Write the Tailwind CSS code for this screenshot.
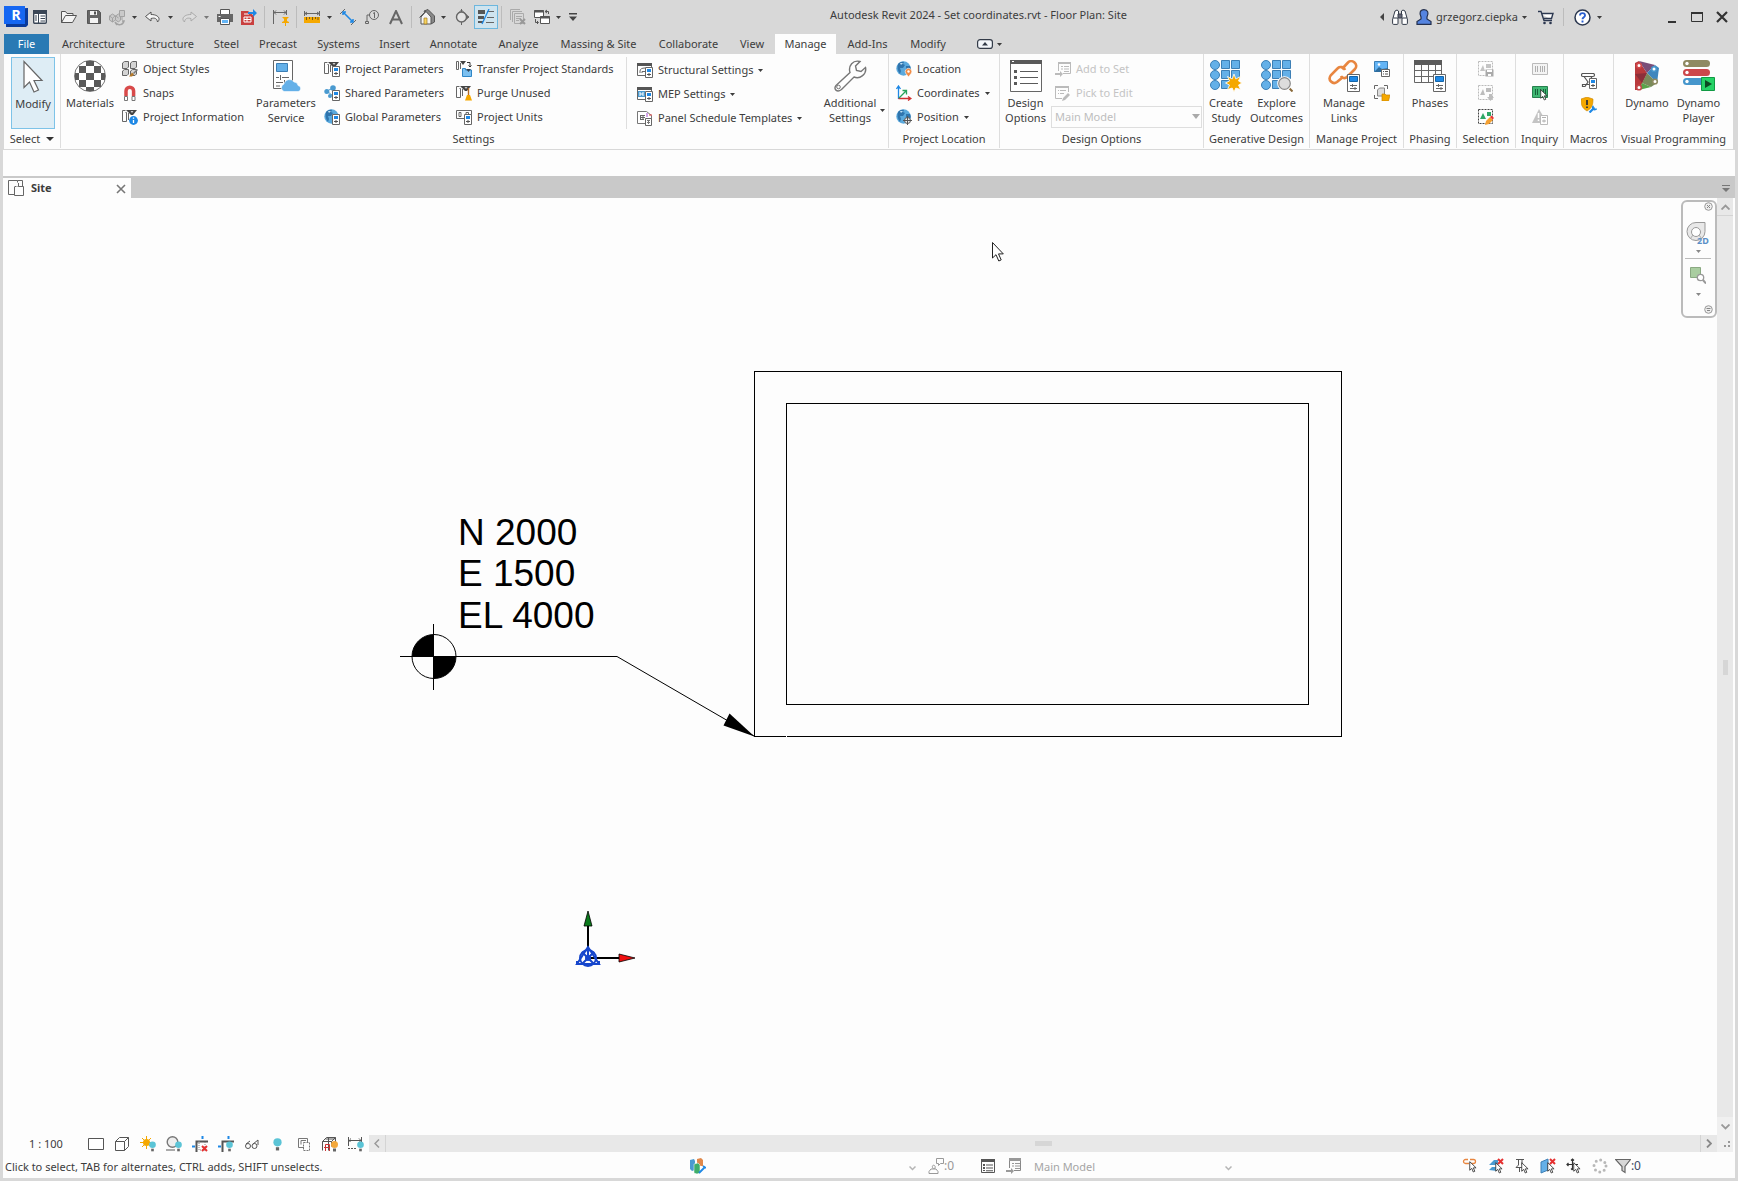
<!DOCTYPE html>
<html lang="en">
<head>
<meta charset="utf-8">
<title>Autodesk Revit 2024 - Set coordinates.rvt - Floor Plan: Site</title>
<meta name="viewport" content="width=device-width, initial-scale=1">
<script src="https://cdn.jsdelivr.net/npm/@tailwindcss/browser@4"></script>
</head>
<body class="flex h-screen flex-col overflow-hidden bg-[#d8d8d8] px-[3px] pb-[3px] font-['Noto_Sans',sans-serif] text-[11px] text-[#3c3c3c]">

<!-- Shared icon parts -->
<svg width="0" height="0" class="absolute" aria-hidden="true">
  <symbol id="caret" viewBox="0 0 5 3"><path d="M0 0h5L2.5 3z" fill="currentColor"/></symbol>
  <symbol id="calc" viewBox="0 0 16 16"><path d="M8.5 5.500h7v10h-7z" fill="#fff" stroke="#666"/><path d="M10 7h4v3h-4z" fill="#1e88e5"/><path d="M10 12.500h4M12 11v3" stroke="#555"/></symbol>
  <symbol id="proj" viewBox="0 0 16 16"><path d="M3.500 1.500h-3v11h4v-9h-1M6.500 11V4" fill="none" stroke="#666"/><path d="M4 1h11l-4 5h-2z" fill="#444"/><path d="M8.500 2h3L10 4z" fill="#ccc"/></symbol>
  <symbol id="globe" viewBox="0 0 16 16"><circle cx="7.500" cy="7.500" r="7.200" fill="#5aa9dd"/><path d="M2 3c2-2 4-2.500 6-2l-1 2 2 1-2 3-3 0 1 3-1 3C1.500 10 1 6 2 3zM10 5l4 0c1 2 1 4 0 5l-3 1-1-3z" fill="#2f74ad"/><path d="M4 2l3 0-2 2z" fill="#bfe0f5"/></symbol>
  <symbol id="window" viewBox="0 0 16 16"><path d="M.5 1.500h14v12H.5z" fill="#fff" stroke="#666"/><path d="M0 1h15v3H0z" fill="#555"/></symbol>
  <symbol id="ptr" viewBox="0 0 9 14"><path d="M.7.8v10l2.400-2.200 1.700 4.200 1.800-.8-1.700-4h3.200z" fill="#fff" stroke="#333"/></symbol>
  <symbol id="bulb" viewBox="0 0 8 12"><circle cx="4" cy="4" r="3.800" fill="#5bc4d6"/><path d="M2.500 8.500h3v3h-3z" fill="#666"/></symbol>
  <symbol id="list" viewBox="0 0 16 16"><path d="M1.500 1.500h13v13h-13z" fill="none" stroke="currentColor"/><path d="M1 1h14v3H1zM3 6h2v2H3zM3 9h2v2H3zM3 12h2v1H3zM6 6.500h7v1H6zM6 9.500h7v1H6zM6 12.200h7v1H6z" fill="currentColor"/></symbol>
</svg>

<!-- Title bar -->
<header class="flex h-[34px] shrink-0 items-center pr-px pl-px">
  <button aria-label="Revit" class="w-6"><svg width="24" height="24" viewBox="0 0 24 24"><path d="M2 4v18h20l2-2V3z" fill="#0b3b9c"/><path d="M0 1h21v18H0z" fill="#1667f2"/><text x="12" y="15" text-anchor="middle" font-size="14" font-weight="700" fill="#fff">R</text></svg></button>
  <nav aria-label="Quick access" class="flex items-center [&>button]:flex [&>button]:h-6 [&>button]:items-center [&>button]:justify-center">
    <button aria-label="Home" class="w-6"><svg width="16" height="16" viewBox="0 0 16 16"><rect x="1.700" y="1.700" width="12.600" height="12.600" rx="1" fill="#fff" stroke="#3a4656" stroke-width="1.400"/><path d="M1 1h14v4H1zM6 5h1v10H6z" fill="#3a4656"/><path d="M3 7h2M3 9h2M3 11h2M8.500 7H13M8.500 9.500H13M8.500 12H13" stroke="#3a4656"/></svg></button>
    <button aria-label="Open" class="ml-[3px] w-7"><svg width="18" height="16" viewBox="0 0 18 16"><path d="M1.500 13.500v-11h4l1.500 2h6v2M1.500 13.500l4-7h11l-4 7z" fill="#f4f4f4" stroke="#555"/></svg></button>
    <button aria-label="Save" class="w-[21px]"><svg width="16" height="16" viewBox="0 0 16 16"><path d="M1.500 1.500h11l2 2v11h-13z" fill="#666" stroke="#555"/><path d="M4 2h7v4H4zM4 9h8v5H4z" fill="#f4f4f4"/><path d="M8 2.500h2v3H8z" fill="#555"/></svg></button>
    <button aria-label="Synchronize" class="w-[25px]"><svg width="18" height="18" viewBox="0 0 18 18" fill="#c9c9c9" stroke="#a2a2a2"><path d="M1.500 8l3-2 3 2v4l-3 2-3-2zM7.500 8l3-2 2 1v5l-2 2-3-2zM1.500 8l3 2 3-2 3 2M4.500 10v4"/><path d="M11.500 2.500h5v6h-5zM14 9v3"/><path d="M8 15c2 3 7 2 8-2l-2 0M9 17l-2-3" fill="none" stroke-width="1.500"/></svg></button>
    <button aria-label="Synchronize options" class="w-[11px]"><svg width="5" height="3"><use href="#caret"/></svg></button>
    <button aria-label="Undo" class="w-[25px]"><svg width="18" height="14" viewBox="0 0 18 14"><path d="M7 2L1.500 6.500 7 11V8.500c4-1 6 0 6.500 3.500 3.500-3 1-7.500-6.500-7.500z" fill="#f4f4f4" stroke="#555"/></svg></button>
    <button aria-label="Undo list" class="w-[11px]"><svg width="5" height="3"><use href="#caret"/></svg></button>
    <button aria-label="Redo" class="w-[25px]"><svg width="18" height="14" viewBox="0 0 18 14"><path d="M11 2l5.500 4.500L11 11V8.500c-4-1-6 0-6.500 3.500C1 9 3.500 4.500 11 4.500z" fill="#ddd" stroke="#aaa"/></svg></button>
    <button aria-label="Redo list" class="w-[11px] text-[#777]"><svg width="5" height="3"><use href="#caret"/></svg></button>
    <button aria-label="Print" class="w-[25px]"><svg width="16" height="16" viewBox="0 0 16 16"><path d="M3.500.5h9v6h-9z" fill="#fff" stroke="#555"/><path d="M0 5h16v8H0z" fill="#666"/><path d="M1.500 7.500h2" stroke="#fff"/><path d="M3.500 9.500h9v6h-9z" fill="#fff" stroke="#555"/><path d="M5 11h6v3H5z" fill="#64b5f6"/></svg></button>
    <button aria-label="PDF" class="w-6"><svg width="16" height="16" viewBox="0 0 16 16"><path d="M0 2h7l6 5v9H0z" fill="#c9403f"/><path d="M3 5h5M3 8h7v5H3zM3 10.500h7M6 8v5" fill="none" stroke="#fff"/><path d="M7 3h5V0l4 4-4 4V5H7z" fill="#1e88e5"/></svg></button>
    <span class="mx-[3px] h-[22px] w-px bg-[#bcbcbc]"></span>
    <button aria-label="Pinned dimension" class="w-[25px]"><svg width="16" height="17" viewBox="0 0 16 17"><path d="M.5 1v14M13.500 1v5M1 3.500h12M3 1.500l-2 2 2 2M11 1.500l2 2-2 2" fill="none" stroke="#666"/><path d="M9 8h7l-2 2v2l2 1v1h-3v3h-1v-3H9v-1l2-1v-2z" fill="#f5a800"/></svg></button>
    <span class="mx-[3px] h-[22px] w-px bg-[#bcbcbc]"></span>
    <button aria-label="Measure" class="w-6"><svg width="16" height="12" viewBox="0 0 16 12"><path d="M.5 0v5M15.500 0v5M1 2.500h14M3 1L1 2.500 3 4M13 1l2 1.500L13 4" fill="none" stroke="#666"/><path d="M0 6h16v6H0z" fill="#f5a800"/><path d="M2.500 6v3M5.500 6v2M8.500 6v3M11.500 6v2M14 6v3" stroke="#7a5a10"/></svg></button>
    <button aria-label="Measure options" class="w-[11px]"><svg width="5" height="3"><use href="#caret"/></svg></button>
    <button aria-label="Aligned dimension" class="w-[25px]"><svg width="16" height="16" viewBox="0 0 16 16"><path d="M0 5l5-5M11 16l5-5" stroke="#666"/><path d="M3 3l10 10M3 6V3h3M10 13h3v-3" fill="none" stroke="#1e88e5" stroke-width="1.500"/></svg></button>
    <button aria-label="Tag" class="w-6"><svg width="16" height="16" viewBox="0 0 16 16" fill="none" stroke="#666"><circle cx="10" cy="6" r="4.500"/><path d="M9 4.500l1.500-1V9M6 6H3v7M1.500 12.500h3v2h-3z"/></svg></button>
    <button aria-label="Text" class="w-6"><svg width="14" height="15" viewBox="0 0 14 15"><path d="M1 14L7 1l6 13M3.500 9.500h7" fill="none" stroke="#666" stroke-width="2"/></svg></button>
    <span class="mx-[3px] h-[22px] w-px bg-[#bcbcbc]"></span>
    <button aria-label="Default 3D view" class="w-[23px]"><svg width="16" height="16" viewBox="0 0 16 16"><path d="M5 2l4-1.500L15.500 7v6L12 15z" fill="#888" stroke="#555"/><path d="M2 8l5-5.500L12 8v7H2z" fill="#f4f4f4" stroke="#555"/><path d="M5 9h3v6H5z" fill="#f7d560" stroke="#a07a20" stroke-width=".7"/><path d="M.5 8.500L7 2" stroke="#555"/></svg></button>
    <button aria-label="View options" class="w-[11px]"><svg width="5" height="3"><use href="#caret"/></svg></button>
    <button aria-label="Section" class="w-[25px]"><svg width="14" height="16" viewBox="0 0 14 16"><path d="M6.500 16V0M6.500 1l3 3M6.500 1l-3 3M9 4l5 4-5 4z" fill="#666" stroke="#666"/><circle cx="6.500" cy="8" r="5" fill="#e4e4e4" stroke="#666" stroke-width="1.400"/></svg></button>
    <button aria-label="Thin lines" class="w-6 border border-[#6db7de] bg-[#cfe4ef]"><svg width="18" height="16" viewBox="0 0 18 16"><path d="M1 1h7v4H1zM1 7h6v3H1zM1 12h5v2H1z" fill="#555"/><path d="M10 2.500h7M10 8.500h7M9 13.500h8" stroke="#666"/><path d="M12 0L5 15" stroke="#1e88e5" stroke-width="1.300"/></svg></button>
    <span class="mx-[3px] h-[22px] w-px bg-[#bcbcbc]"></span>
    <button aria-label="Close inactive views" class="w-[25px]"><svg width="16" height="16" viewBox="0 0 16 16" stroke="#aaa" fill="#d8d8d8"><path d="M.5 11V.5H10M2.500 13V2.500H12"/><path d="M4.500 4.500h9v10h-9zM6 7.500h6M6 9.500h5M6 11.500h3"/><path d="M10 10l5 5M15 10l-5 5" stroke="#999" stroke-width="2"/></svg></button>
    <button aria-label="Switch windows" class="w-[23px]"><svg width="16" height="16" viewBox="0 0 16 16" stroke="#555" fill="#fff"><path d="M.5 1.500h9v7h-9zM6.500 7.500h9v7h-9z"/><path d="M0 2.500h10M6 8.500h10" stroke-width="2"/><path d="M11 2.500h3.500V5M13 1l-2 1.500L13 4M1.500 10v3.500H4M3 12l1.500 1.500L3 15" fill="none"/></svg></button>
    <button aria-label="Window options" class="w-[11px]"><svg width="5" height="3"><use href="#caret"/></svg></button>
    <button aria-label="Customize" class="w-[18px]"><svg width="8" height="8" viewBox="0 0 8 8"><path d="M0 0h8v1.500H0zM0 3.500h8L4 8z" fill="#444"/></svg></button>
  </nav>
  <h1 class="min-w-0 flex-1 truncate pb-1 text-center">Autodesk Revit 2024 - Set coordinates.rvt - Floor Plan: Site</h1>
  <div class="flex items-center [&>button]:flex [&>button]:h-6 [&>button]:items-center [&>button]:justify-center">
    <button aria-label="Collapse" class="w-[13px]"><svg width="4" height="8"><path d="M4 0v8L0 4z" fill="#444"/></svg></button>
    <button aria-label="Search" class="w-6"><svg width="16" height="16" viewBox="0 0 16 16" fill="#fff" stroke="#333b48"><path d="M1 9l2-7 2-1 1.500 1v7M15 9l-2-7-2-1-1.500 1v7"/><path d="M6 5h4v4H6z" fill="#667"/><rect x=".6" y="9" width="5.400" height="6.400" rx="1"/><rect x="10" y="9" width="5.400" height="6.400" rx="1"/></svg></button>
    <button class="w-[122px] justify-start! gap-1 pl-1"><svg width="16" height="16" viewBox="0 0 16 16"><path d="M5 8C3 4 4 .7 8 .7S13 4 11 8v2l4 2.500v2.800H1v-2.800L5 10z" fill="#5584e0" stroke="#24304d" stroke-width="1.200"/></svg><span>grzegorz.ciepka</span><svg width="5" height="3"><use href="#caret"/></svg></button>
    <button aria-label="App store" class="w-6"><svg width="16" height="16" viewBox="0 0 16 16"><path d="M0 2.500h3l3 9h8M4 4.500h11l-1.500 5h-8" fill="#fff" stroke="#2c3850" stroke-width="1.400"/><circle cx="6.500" cy="14" r="1.300" fill="#2c3850"/><circle cx="12.500" cy="14" r="1.300" fill="#2c3850"/></svg></button>
    <span class="mr-1.5 ml-[5px] h-[18px] w-px bg-[#bcbcbc]"></span>
    <button aria-label="Help" class="w-6"><svg width="17" height="17" viewBox="0 0 17 17"><circle cx="8.500" cy="8.500" r="7.500" fill="#fff" stroke="#2c3850" stroke-width="1.500"/><path d="M6 6.500c0-3.200 5-3.200 5 0 0 1.800-2.500 1.800-2.500 3.800M8.500 11.500v2" fill="none" stroke="#2a5fd0" stroke-width="1.900"/></svg></button>
    <button aria-label="Help options" class="w-[11px]"><svg width="5" height="3"><use href="#caret"/></svg></button>
    <span class="w-[54px]"></span>
    <button aria-label="Minimize" class="w-[25px]"><svg width="16" height="16"><path d="M4 12h8v2H4z" fill="#333"/></svg></button>
    <button aria-label="Maximize" class="w-[25px]"><svg width="14" height="14"><path d="M1.500 2.500h11v9h-11z" fill="none" stroke="#333"/><path d="M1 2h12v2H1z" fill="#333"/></svg></button>
    <button aria-label="Close" class="w-[25px]"><svg width="14" height="14"><path d="M2 2l10 10M12 2L2 12" stroke="#333" stroke-width="2.200"/></svg></button>
  </div>
</header>

<!-- Ribbon tabs -->
<nav aria-label="Ribbon tabs" class="flex h-5 shrink-0 pl-px [&>button]:shrink-0 [&>button]:whitespace-nowrap">
  <button class="mr-0.5 w-[45px] bg-[#2a7ab4] text-white">File</button>
  <button class="w-[85px]">Architecture</button>
  <button class="w-[68px]">Structure</button>
  <button class="w-[45px]">Steel</button>
  <button class="w-[58px]">Precast</button>
  <button class="w-[63px]">Systems</button>
  <button class="w-[49px]">Insert</button>
  <button class="w-[69px]">Annotate</button>
  <button class="w-[61px]">Analyze</button>
  <button class="w-[99px]">Massing &amp; Site</button>
  <button class="w-[81px]">Collaborate</button>
  <button class="w-[46px]">View</button>
  <button class="w-[61px] bg-[#fdfdfd]">Manage</button>
  <button class="w-[63px]">Add-Ins</button>
  <button class="w-[58px]">Modify</button>
  <button aria-label="Minimize ribbon" class="ml-5 flex items-center gap-1"><svg width="16" height="10" viewBox="0 0 16 10"><rect x=".6" y=".6" width="14.800" height="8.800" rx="2.500" fill="#f3f6fa" stroke="#333b48" stroke-width="1.200"/><path d="M8 3l3 3.500H5z" fill="#333b48"/></svg><svg width="5" height="3"><use href="#caret"/></svg></button>
</nav>

<!-- Ribbon -->
<main class="mr-0.5 ml-px flex h-[95px] shrink-0 overflow-hidden bg-[#fdfdfd] [&>section]:flex [&>section]:h-[94px] [&>section]:shrink-0 [&>section]:flex-col [&>section]:border-r [&>section]:border-[#dedede] [&>section>div]:flex [&>section>div]:h-[77px] [&>section>div]:pt-[3px] [&>section>h2]:text-center [&>section>h2]:leading-4 [&>section>h2]:whitespace-nowrap">
  <section class="w-[57px]">
    <div class="pl-[7px]">
      <button class="flex h-[72px] w-11 flex-col items-center border border-[#7dc3e8] bg-[#deedf5] pt-0.5 leading-[15px]"><svg class="mb-0.5" width="32" height="34" viewBox="0 0 32 34"><path d="M7 1.500v26l5.500-5.500 4.500 10 4.500-2-4.500-9.500H25z" fill="#fff" stroke="#666" stroke-width="1.200"/></svg>Modify</button>
    </div>
    <h2><button class="inline-flex items-center gap-1.5">Select <svg width="8" height="4" viewBox="0 0 8 4"><path d="M0 0h8L4 4z" fill="#333"/></svg></button></h2>
  </section>

  <section class="w-[828px]">
    <div class="[&_ul]:shrink-0 [&_li>button]:flex [&_li>button]:h-6 [&_li>button]:items-center [&_li>button]:gap-[5px] [&_li>button]:whitespace-nowrap">
      <button class="flex w-[58px] shrink-0 flex-col items-center pt-[3px] leading-[15px]"><svg class="mb-[3px]" width="32" height="32" viewBox="0 0 32 32"><circle cx="16" cy="16" r="15.500" fill="#fff" stroke="#777"/><path d="M12 1h8v5h-8zM5 6h7v7H5zM20 6h7v7h-7zM1 13h4v7H1zM12 13h8v7h-8zM27 13h4v7h-4zM5 20h7v7H5zM20 20h7v7h-7zM12 27h8v4h-8z" fill="#5a5a5a"/></svg>Materials</button>
      <ul class="w-[132px] pl-[3px]">
        <li><button><svg width="16" height="16" viewBox="0 0 16 16"><path d="M.5 2l2-1.500h4V6L5 7.500H.5zM8.500 2l2-1.500h4V6L13 7.500H8.500zM.5 10l2-1.500h4V13L5 14.500H.5zM8.500 10l2-1.500h4V13L13 14.500H8.500z" fill="#d4d4d4" stroke="#666"/><path d="M7 15.500l3-4 2 2-2 2z" fill="#b57a2a"/><path d="M11 12l4-4 1 1-4 4z" fill="#777"/></svg>Object Styles</button></li>
        <li><button><svg width="16" height="16" viewBox="0 0 16 16"><path d="M4 11V6a3.800 3.800 0 0 1 7.600 0v5" fill="none" stroke="#d84a4a" stroke-width="3.500"/><path d="M2.500 11.500h3v4h-3zM10 11.500h3v4h-3z" fill="#fff" stroke="#777"/></svg>Snaps</button></li>
        <li><button><svg width="16" height="16" viewBox="0 0 16 16"><use href="#proj"/><circle cx="11.500" cy="11.500" r="4.400" fill="#1e88e5"/><path d="M11.500 8.500v1.200M11.500 11v3" stroke="#fff" stroke-width="1.300"/></svg>Project Information</button></li>
      </ul>
      <button class="flex w-[70px] shrink-0 flex-col items-center pt-[3px] leading-[15px]"><svg class="mb-[3px]" width="32" height="32" viewBox="0 0 32 32"><path d="M3.500.5h19v28h-19z" fill="#fff" stroke="#666"/><path d="M6.500 3.500h11v8h-11z" fill="#64b0e8" stroke="#3c7fb5"/><path d="M6 17.500h3M12 17.500h7M10.500 15v5M6 22.500h7M14.500 20v5M6 26h4" stroke="#666"/><path d="M14 31.500a4 4 0 0 1 0-7.500 5.500 5.500 0 0 1 10-2 4 4 0 0 1 4 3.500c4 1 3 6 0 6z" fill="#64b0e8" stroke="#fff" stroke-width=".6"/></svg>Parameters<br>Service</button>
      <ul class="w-[132px] pl-[3px]">
        <li><button><svg width="16" height="16"><use href="#proj"/><use href="#calc"/></svg>Project Parameters</button></li>
        <li><button><svg width="16" height="16" viewBox="0 0 16 16"><path d="M3 6l6-3M3 6l6 5" stroke="#4a9ad0"/><circle cx="2.800" cy="6.500" r="2.500" fill="#4a9ad0"/><circle cx="9" cy="3" r="2.800" fill="#4a9ad0"/><circle cx="6" cy="11" r="2" fill="#4a9ad0"/><use href="#calc"/></svg>Shared Parameters</button></li>
        <li><button><svg width="16" height="16"><use href="#globe"/><use href="#calc"/></svg>Global Parameters</button></li>
      </ul>
      <ul class="w-[173px] pl-[3px]">
        <li><button><svg width="16" height="16" viewBox="0 0 16 16"><path d="M.5.500h2v8h-2zM4.500 2v6" fill="none" stroke="#666"/><path d="M4 0h6L7 4z" fill="#444"/><path d="M11 1.500h3V6M12.500 4.500L14 6l1.500-1.500" fill="none" stroke="#333"/><path d="M6.500 7.500h3v1.500h6v6.500h-9z" fill="#7cc0f0" stroke="#2f86c6"/><path d="M10 8h5l-2.500 3z" fill="#345"/></svg>Transfer Project Standards</button></li>
        <li><button><svg width="16" height="16" viewBox="0 0 16 16"><use href="#proj"/><path d="M12.500 3v8" stroke="#b06a2a" stroke-width="1.400"/><path d="M11 10h3l2 5.500H9z" fill="#f5a800"/></svg>Purge Unused</button></li>
        <li><button><svg width="16" height="16" viewBox="0 0 16 16"><path d="M.5 1.500h15v8H.5z" fill="#fff" stroke="#666"/><path d="M3 3.500h2v4H3zM10 5V3.500h2.500V5" fill="none" stroke="#666"/><use href="#calc"/></svg>Project Units</button></li>
      </ul>
      <span class="h-[72px] w-px shrink-0 bg-[#dedede]"></span>
      <ul class="w-[185px] pt-px pl-2.5">
        <li><button><svg width="16" height="16" viewBox="0 0 16 16"><use href="#window"/><path d="M3 11V9c0-2 2-3 5-3M5 11V9.500h3" fill="none" stroke="#666"/><use href="#calc"/></svg>Structural Settings<svg width="5" height="3"><use href="#caret"/></svg></button></li>
        <li><button><svg width="16" height="16" viewBox="0 0 16 16"><use href="#window"/><path d="M1 5h7v6H1z" fill="#4a9ad0"/><path d="M3 6v4M6 6v4M3 8h3" stroke="#fff"/><use href="#calc"/></svg>MEP Settings<svg width="5" height="3"><use href="#caret"/></svg></button></li>
        <li><button><svg width="16" height="16" viewBox="0 0 16 16"><path d="M.5 1.500h9l5 4v8H.5z" fill="#fff" stroke="#777"/><path d="M3 5.500h5M3 7.500h5M3 9.500h4M3.500 5v5M6 5v5" stroke="#666"/><path d="M9 6h2M10 3v2" stroke="#a54bd0"/><path d="M12 5h3" stroke="#e04040"/><path d="M8.500 8.500h6v7h-6z" fill="#fff" stroke="#666"/><path d="M10 10.500h3M10 12.500h3M11.500 10v4" stroke="#777"/></svg>Panel Schedule Templates<svg width="5" height="3"><use href="#caret"/></svg></button></li>
      </ul>
      <button class="relative flex w-[76px] shrink-0 flex-col items-center pt-[3px] leading-[15px]"><svg class="mb-[3px]" width="34" height="32" viewBox="0 0 34 32"><path d="M3 25.500L17 12.500C15 6 20-.5 27 1.500L22.500 6l1 4.500L28 11.500 32.500 7.500C34 14 27 19.500 21 17L8.500 29.500C4 33 0 29 3 25.500z" fill="#fff" stroke="#777" stroke-width="1.400"/><circle cx="5.500" cy="27" r="1.800" fill="none" stroke="#777"/></svg>Additional<br>Settings<svg class="absolute top-[52px] right-[3px]" width="5" height="3"><use href="#caret"/></svg></button>
    </div>
    <h2 class="pr-[2px]">Settings</h2>
  </section>

  <section class="w-[111px]">
    <div>
      <ul class="pl-[7px] [&_button]:flex [&_button]:h-6 [&_button]:items-center [&_button]:gap-[5px] [&_button]:whitespace-nowrap">
        <li><button><svg width="16" height="16" viewBox="0 0 16 16"><use href="#globe"/><path d="M12.500 16l-3-4a3.300 3.300 0 1 1 6 0z" fill="#f08c46" stroke="#fff" stroke-width=".6"/><circle cx="12.500" cy="10.500" r="1.200" fill="#fff"/></svg>Location</button></li>
        <li><button><svg width="16" height="16" viewBox="0 0 16 16" fill="none"><path d="M2.500 14V2M.5 4l2-3 2 3" stroke="#1e88e5" stroke-width="1.300"/><path d="M2.500 13.500h12M12 11.500l3 2-3 2" stroke="#d03030" stroke-width="1.300"/><path d="M3 13l7-7M6.500 5.500h4v4" stroke="#27a35a" stroke-width="1.300"/></svg>Coordinates<svg width="5" height="3"><use href="#caret"/></svg></button></li>
        <li><button><svg width="16" height="16" viewBox="0 0 16 16"><use href="#globe"/><circle cx="11.500" cy="11.500" r="3" fill="#eee" stroke="#555"/><path d="M11.500 7v9M7 11.500h9" stroke="#555"/></svg>Position<svg width="5" height="3"><use href="#caret"/></svg></button></li>
      </ul>
    </div>
    <h2>Project Location</h2>
  </section>

  <section class="w-[204px]">
    <div>
      <button class="flex w-[51px] shrink-0 flex-col items-center pt-[3px] leading-[15px]"><svg class="mb-[3px]" width="32" height="32" viewBox="0 0 32 32"><path d="M.5.500h31v31H.5z" fill="#fff" stroke="#666"/><path d="M0 0h32v4H0zM4 10h3v3H4zM4 16h3v3H4zM4 22h3v3H4zM10 11h18v1H10zM10 17h18v1H10zM10 23h18v1H10z" fill="#5a5a5a"/><path d="M2 1.500h2" stroke="#fff"/></svg>Design<br>Options</button>
      <div class="flex flex-col text-[#c4c4c4]">
        <button class="flex h-6 items-center gap-[5px] pl-1"><svg width="16" height="16" viewBox="0 0 16 16"><path d="M3.500 10V1.500h12v11H8" fill="none" stroke="#bbb"/><path d="M3 1h13v2H3zM6 5h2v1H6zM9 5h5v1H9zM6 7.500h2v1H6zM9 7.500h5v1H9zM9 10h5v1H9zM0 12h5v-2l3 3-3 3v-2H0z" fill="#bbb"/></svg>Add to Set</button>
        <button class="flex h-6 items-center gap-[5px] pl-1"><svg width="16" height="16" viewBox="0 0 16 16"><path d="M7 13.500H.5v-12h13V7" fill="none" stroke="#bbb"/><path d="M0 1h14v2H0zM3 5h1v1H3zM5 5h6v1H5zM3 8h1v1H3zM5 8h4v1H5zM8 13l5-5 2 2-5 5-3 1z" fill="#bbb"/></svg>Pick to Edit</button>
        <div class="relative mt-px">
          <select aria-label="Active design option" disabled class="block h-[22px] w-[151px] appearance-none border border-[#dedede] bg-transparent pl-[3px] text-[11px] text-[#bdbdbd] opacity-100"><option>Main Model</option></select>
          <svg class="absolute top-2 right-0.5 text-[#aaa]" width="8" height="5"><use href="#caret"/></svg>
        </div>
      </div>
    </div>
    <h2>Design Options</h2>
  </section>

  <section class="w-[106px]">
    <div>
      <button class="flex w-[44px] shrink-0 flex-col items-center pt-[3px] leading-[15px]"><svg class="mb-[3px]" width="32" height="32" viewBox="0 0 32 32"><g fill="#64b0e8" stroke="#3c7fb5"><circle cx="5" cy="5" r="4.500"/><circle cx="5" cy="15" r="4.500"/><circle cx="5" cy="25" r="4.500"/><path d="M11.500.5h8v8h-8zM21.500.5h8v8h-8zM11.500 10.500h8v8h-8zM21.500 10.500h8v8h-8zM11.500 20.500h8v8h-8z"/></g><path d="M24 14l1.800 5 4.700-2.500L28.500 21l3.500 2-3.500 2 2 4.500-4.700-1.500L24 32l-1.800-4-4.700 1.500 2-4.500-4-2 4-2-2-4.500 4.700 2.500z" fill="#f5a800" stroke="#fff" stroke-width=".8"/></svg>Create<br>Study</button>
      <button class="flex w-[57px] shrink-0 flex-col items-center pt-[3px] leading-[15px]"><svg class="mb-[3px]" width="32" height="32" viewBox="0 0 32 32"><g fill="#64b0e8" stroke="#3c7fb5"><circle cx="5" cy="5" r="4.500"/><circle cx="5" cy="15" r="4.500"/><circle cx="5" cy="25" r="4.500"/><path d="M11.500.5h8v8h-8zM21.500.5h8v8h-8zM11.500 10.500h8v8h-8zM21.500 10.500h8v8h-8zM11.500 20.500h8v8h-8z"/></g><path d="M27 27l4.500 4.500" stroke="#8a6a3a" stroke-width="2"/><circle cx="23.500" cy="23.500" r="5.800" fill="#ddd" stroke="#fff" stroke-width="3"/><circle cx="23.500" cy="23.500" r="5.800" fill="#ddd" stroke="#888" stroke-width="1.200"/></svg>Explore<br>Outcomes</button>
    </div>
    <h2>Generative Design</h2>
  </section>

  <section class="w-[94px]">
    <div>
      <button class="flex w-[64px] shrink-0 flex-col items-center pt-[3px] pl-1 leading-[15px]"><svg class="mb-[3px]" width="32" height="32" viewBox="0 0 32 32"><g fill="none" stroke="#e88640" stroke-width="2.600"><path d="M14 9l6-6.500c4-4 11 2 7 6.500l-8 8c-2 2-5 1-6-1"/><path d="M15 17l-6 5c-4 3-10-2-6-7l7-7c2-2 6-1 7 2"/></g><path d="M19.500 14.500h12v17h-12z" fill="#fff" stroke="#666"/><path d="M21.500 16.500h8v5h-8z" fill="#1e88e5" stroke="#1565a8"/><path d="M22 25.500h7M22 28.500h7M24.500 24v3M27 27v3" stroke="#666"/></svg>Manage<br>Links</button>
      <div class="flex flex-col">
        <button aria-label="Decal types" class="flex h-6 items-center"><svg width="16" height="16" viewBox="0 0 16 16"><path d="M.5.500h13v10H.5z" fill="#64b5f6" stroke="#3c7fb5"/><path d="M0 11l5-5 3 2 6-1v4z" fill="#2e6d9e"/><circle cx="5" cy="3.500" r="1.300" fill="#fff"/><path d="M7.500 8.500h8v7h-8z" fill="#fff" stroke="#666"/><path d="M9 10.500h1M11 10.500h3M9 13h1M11 13h3" stroke="#555"/></svg></button>
        <button aria-label="Starting view" class="flex h-6 items-center"><svg width="16" height="16" viewBox="0 0 16 16"><path d="M.5 4V.5H4M10 .5h3.500V4M.5 10v3.500H4" fill="none" stroke="#666"/><path d="M3.500 5l2-2h5v6l-2 2h-5z" fill="#ddd" stroke="#888"/><path d="M8 9h3l1 1h4l-1.500 6H8z" fill="#f5a800" stroke="#c98500" stroke-width=".7"/></svg></button>
      </div>
    </div>
    <h2>Manage Project</h2>
  </section>

  <section class="w-[53px]">
    <div>
      <button class="flex w-full shrink-0 flex-col items-center pt-[3px] leading-[15px]"><svg class="mb-[3px]" width="32" height="32" viewBox="0 0 32 32"><path d="M.5.500h27v22H.5zM7.500 4v18M14.500 4v18M21.500 4v18M1 10.500h27M1 16.500h27" fill="none" stroke="#666"/><path d="M0 0h28v5H0z" fill="#5a5a5a"/><path d="M19.500 14.500h12v17h-12z" fill="#fff" stroke="#666"/><path d="M21.500 16.500h8v5h-8z" fill="#1e88e5" stroke="#1565a8"/><path d="M22 25.500h7M22 28.500h7M24.500 24v3M27 27v3" stroke="#666"/></svg>Phases</button>
    </div>
    <h2>Phasing</h2>
  </section>

  <section class="w-[59px]">
    <div class="flex-col items-center [&>button]:flex [&>button]:h-6 [&>button]:items-center">
      <button aria-label="Save selection"><svg width="16" height="16" viewBox="0 0 16 16"><path d="M.5.500h14v14H.5z" fill="none" stroke="#bbb" stroke-dasharray="2 1"/><path d="M2 10l3-6 2 6zM8 3h5v4H8z" fill="#c4c4c4"/><path d="M7.500 8.500h8v7h-8z" fill="#aaa"/><path d="M9 9h5v2H9zM10 13h3v2h-3z" fill="#fff"/></svg></button>
      <button aria-label="Load selection"><svg width="16" height="16" viewBox="0 0 16 16"><path d="M.5.500h14v14H.5z" fill="none" stroke="#bbb" stroke-dasharray="2 1"/><path d="M2 10l3-6 2 6zM8 3h5v4H8zM11 9h3v3h2l-3.500 4L9 12h2z" fill="#bdbdbd"/></svg></button>
      <button aria-label="Edit selection"><svg width="16" height="16" viewBox="0 0 16 16"><path d="M.5.500h14v14H.5z" fill="none" stroke="#444" stroke-dasharray="2 1"/><path d="M2 10l3-6 3 6zM9 3h4v4H9z" fill="#2fa866"/><path d="M7 16l1-4 4-4 3 3-4 4z" fill="#f5a030"/><path d="M12 8l1.500-1.500 2.500 2.500-1.500 1.500z" fill="#e33"/></svg></button>
    </div>
    <h2>Selection</h2>
  </section>

  <section class="w-[48px]">
    <div class="flex-col items-center [&>button]:flex [&>button]:h-6 [&>button]:items-center">
      <button aria-label="IDs of selection"><svg width="16" height="16" viewBox="0 0 16 16"><path d="M.5 2.500h15v11H.5z" fill="#f4f4f4" stroke="#bbb"/><path d="M3.500 5v6M5.500 5v6M8.500 5v6M10.500 5v6M12.500 5v6" stroke="#b0b0b0"/></svg></button>
      <button aria-label="Select by ID"><svg width="16" height="16" viewBox="0 0 16 16"><path d="M.5 1.500h15v11H.5z" fill="#3fb873" stroke="#27804e"/><path d="M3.500 4v6M5.500 4v6M8.500 4v3M11.500 4v5M13.500 4v5" stroke="#17613a"/><svg x="8" y="4" width="8" height="12"><use href="#ptr"/></svg></svg></button>
      <button aria-label="Warnings"><svg width="16" height="16" viewBox="0 0 16 16"><path d="M0 14L7 0l4 7v7z" fill="#c4c4c4"/><path d="M6.500 4v5M6.500 10.500V12" stroke="#fff" stroke-width="1.500"/><path d="M8.500 6.500h7v9h-7z" fill="#fff" stroke="#bbb"/><path d="M10 8.500h4M10 12h4M12 10.500v3" stroke="#b0b0b0"/></svg></button>
    </div>
    <h2>Inquiry</h2>
  </section>

  <section class="w-[50px]">
    <div class="flex-col items-center justify-center pb-[3px] [&>button]:flex [&>button]:h-6 [&>button]:items-center">
      <button aria-label="Macro manager"><svg width="16" height="16" viewBox="0 0 16 16"><path d="M2 .5h10c2 0 2 3 0 3H2c-2 0-2-3 0-3zM3 3.500L7 9l-3 4.500H1.500v-2H8M11 3.500L9 7" fill="#fff" stroke="#555" stroke-width="1.200"/><use href="#calc"/></svg></button>
      <button aria-label="Macro security"><svg width="16" height="16" viewBox="0 0 16 16"><path d="M6 0l6 2c0 6-1 9-6 12C1 11 0 8 0 2z" fill="#f5a800" stroke="#c98500" stroke-width=".6"/><path d="M6 3v5M6 9.500V11" stroke="#333" stroke-width="1.800"/><path d="M8.500 15.500l5-5" stroke="#1e88e5" stroke-width="2.200"/><path d="M12.500 9a2 2 0 1 0 3 2.500" fill="none" stroke="#1e88e5" stroke-width="1.600"/></svg></button>
    </div>
    <h2>Macros</h2>
  </section>

  <section class="w-[119px] border-r-0!">
    <div class="pl-1.5">
      <button class="flex w-[54px] shrink-0 flex-col items-center pt-[3px] leading-[15px]"><svg class="mb-[3px]" width="26" height="32" viewBox="0 0 26 32"><path d="M1 3l4-2 8 12L5 30H1z" fill="#b8393c"/><path d="M5 1l16 4-8 8z" fill="#7a4e78"/><path d="M21 5l4 3-2 15-10-10z" fill="#3f86bd"/><path d="M13 13l10 10-6 4-9-4z" fill="#7a8a5a"/><path d="M5 30l3-7 9 4z" fill="#5aa34a"/><path d="M13 13l-5 10-7-9z" fill="#8c2f3a"/><g fill="#fff" stroke-width="1.600"><circle cx="5" cy="5.500" r="2.300" stroke="#d3494c"/><circle cx="20" cy="9" r="2.300" stroke="#4696cc"/><circle cx="21" cy="21.500" r="2.300" stroke="#8f8a62"/><circle cx="5" cy="27.500" r="2.300" stroke="#c2484a"/></g></svg>Dynamo</button>
      <button class="flex w-[49px] shrink-0 flex-col items-center pt-[3px] leading-[15px]"><svg class="mb-[3px]" width="32" height="32" viewBox="0 0 32 32"><rect width="27" height="7" rx="3.500" fill="#8f8a62"/><rect y="9" width="27" height="7" rx="3.500" fill="#cc474b"/><rect y="18" width="22" height="7" rx="3.500" fill="#4696cc"/><g fill="#fff"><circle cx="4" cy="3.500" r="1.700"/><circle cx="4" cy="12.500" r="1.700"/><circle cx="4" cy="21.500" r="1.700"/></g><path d="M18.500 17.500h13v13h-13z" fill="#25d366" stroke="#119a44"/><path d="M22 20l7 4-7 4z" fill="#0c4a22"/></svg>Dynamo<br>Player</button>
    </div>
    <h2>Visual Programming</h2>
  </section>
</main>

<!-- Options bar -->
<div class="h-[27px] shrink-0 border-t border-[#d8d8d8] bg-[#fdfdfd]"></div>

<!-- Document tabs -->
<div class="flex h-[22px] shrink-0 items-stretch bg-[#c9c9c9] pt-0.5">
  <div class="flex w-32 items-center bg-[#fdfdfd] px-[5px] pt-px">
    <svg width="16" height="17" viewBox="0 0 16 17" fill="none" stroke="#666"><path d="M6.500 14.500h-6V.5h9v2"/><path d="M9.500.5h5v6M6.500 7v8.500h9v-9h-5V3"/><path d="M6.500 6.500h4" stroke-dasharray="2 1"/></svg>
    <span class="ml-[7px] flex-1 font-bold">Site</span>
    <button aria-label="Close Site"><svg width="10" height="10"><path d="M1 1l8 8M9 1L1 9" stroke="#777" stroke-width="1.600"/></svg></button>
  </div>
  <button aria-label="Tab list" class="mr-[5px] ml-auto pt-0.5"><svg width="8" height="8" viewBox="0 0 8 8"><path d="M0 0h8v1H0zM0 3h8L4 7z" fill="#777"/></svg></button>
</div>

<!-- Drawing area -->
<div class="flex min-h-0 flex-1 bg-[#fdfdfd] pr-0.5">
  <div class="relative min-w-0 flex-1 overflow-hidden">
    <svg class="absolute inset-0 size-full" role="img" aria-label="Site plan">
      <g fill="none" stroke="#000" shape-rendering="crispEdges">
        <path d="M783 538.500h-31.500v-365h587v365H784M783.500 205.500h522v301h-522z"/>
        <path d="M397 458.500h217M430.500 426v66"/>
      </g>
      <path d="M614 458.500L751 538" stroke="#000"/>
      <path d="M751.500 538.500l-25-23-6 12z"/>
      <circle cx="431" cy="458.500" r="22" fill="#fdfdfd" stroke="#000"/>
      <path d="M431 458.500v-22a22 22 0 0 0-22 22zM431 458.500v22a22 22 0 0 0 22-22z"/>
      <path d="M408 458.500h45M430.500 436v45" stroke="#000" shape-rendering="crispEdges"/>
      <g font-family="Liberation Sans, Arial, sans-serif" font-size="37" fill="#000">
        <text x="455" y="347">N 2000</text>
        <text x="455" y="388">E 1500</text>
        <text x="455" y="430">EL 4000</text>
      </g>
      <!-- Coordinate origin -->
      <path d="M585 726v34h34" fill="none" stroke="#000" stroke-width="2"/>
      <path d="M585 713l4 15h-8z" fill="#0b7a1c" stroke="#000" stroke-width=".8"/>
      <path d="M632 760l-16 4v-8z" fill="#f01010" stroke="#000" stroke-width=".8"/>
      <g fill="none" stroke="#1646cc" stroke-width="2"><path d="M585 749l-11 17h22z"/><circle cx="585" cy="760" r="8"/><path d="M579 754l12 12M591 754l-12 12M585 751v8M574 763v4M596 763v4"/></g>
      <circle cx="585" cy="760" r="3" fill="#1646cc"/>
      <!-- Mouse pointer -->
      <path d="M989.500 44.500v15.500l3.500-3.300 2.800 6.300 2.400-1.100-2.700-6h4.800z" fill="#fff" stroke="#222"/>
    </svg>
    <!-- Navigation bar -->
    <div class="absolute top-0.5 right-0 flex h-[118px] w-9 flex-col items-center rounded-md border-2 border-[#bbb] bg-[#fdfdfd] pr-0.5 text-[#888]">
      <button aria-label="Close navigation bar" class="self-end"><svg width="9" height="9"><circle cx="4.500" cy="4.500" r="3.800" fill="#eee" stroke="#999"/><path d="M3 3l3 3M6 3L3 6" stroke="#888"/></svg></button>
      <button aria-label="2D steering wheel" class="mt-2.5"><svg width="26" height="25" viewBox="0 0 26 25"><path d="M11 1.500h9v9a9 9 0 1 1-9-9z" fill="#e8e8e8" stroke="#999"/><circle cx="11" cy="11" r="4.500" fill="#fff" stroke="#999"/><path d="M14 14l3 4M8 14l-3 4" stroke="#aaa"/><text x="12" y="23" font-size="9" font-weight="700" fill="#5a8fc7">2D</text></svg></button>
      <button aria-label="Wheel options" class="mt-1 flex"><svg width="5" height="3"><use href="#caret"/></svg></button>
      <span class="mt-[5px] h-px w-[26px] shrink-0 bg-[#bbb]"></span>
      <button aria-label="Zoom region" class="mt-2"><svg width="16" height="17" viewBox="0 0 16 17"><path d="M.5.500h10v10H.5z" fill="#a9cda0" stroke="#8aa982"/><circle cx="10.500" cy="10.500" r="3.200" fill="#fff" stroke="#999" stroke-width="1.300"/><path d="M13 13l3 3.500" stroke="#999" stroke-width="2"/></svg></button>
      <button aria-label="Zoom options" class="mt-[9px] flex"><svg width="5" height="3"><use href="#caret"/></svg></button>
      <button aria-label="Navigation bar options" class="mt-auto mb-0.5 self-end"><svg width="9" height="9"><circle cx="4.500" cy="4.500" r="3.800" fill="#eee" stroke="#999"/><path d="M2.500 3.500h4M3 5.500h3" stroke="#888"/></svg></button>
    </div>
  </div>
  <!-- Vertical scroll bar -->
  <div class="flex w-4 shrink-0 flex-col items-center justify-between bg-[#e8e8e8]">
    <button aria-label="Scroll up" class="flex h-[18px] w-full items-center justify-center border-b border-[#d4d4d4]"><svg width="9" height="6"><path d="M.5 5.500l4-4 4 4" fill="none" stroke="#999" stroke-width="1.800"/></svg></button>
    <span class="mt-0.5 h-[15px] w-[5px] bg-[#d6d6d6]"></span>
    <button aria-label="Scroll down" class="flex h-[18px] w-full items-center justify-center bg-[#f0f0f0] pt-0.5"><svg width="9" height="6"><path d="M.5.500l4 4 4-4" fill="none" stroke="#999" stroke-width="1.800"/></svg></button>
  </div>
</div>

<!-- View control bar -->
<div class="flex h-[17px] shrink-0 items-center bg-[#fdfdfd] pr-0.5">
  <button class="w-[80px] pt-0.5 pl-[26px] text-left whitespace-nowrap">1 : 100</button>
  <div class="flex w-[286px] [&>button]:flex [&>button]:w-[26px] [&>button]:justify-center">
    <button aria-label="Detail level"><svg width="16" height="16"><path d="M.5 2.500h15v11H.5z" fill="#fff" stroke="#555"/></svg></button>
    <button aria-label="Visual style"><svg width="16" height="16"><path d="M1.500 5.500h9v9h-9zM1.500 5.500l4-4h9v9l-4 4M10.500 5.500l4-4" fill="#fff" stroke="#555"/></svg></button>
    <button aria-label="Sun path"><svg width="16" height="16" viewBox="0 0 16 16"><path d="M6.500 0v13M0 6.500h13M2 2l9 9M11 2l-9 9" stroke="#f5a800"/><circle cx="6.500" cy="6.500" r="3.500" fill="#f5a800"/><svg x="9" y="5" width="7" height="11"><use href="#bulb"/></svg></svg></button>
    <button aria-label="Shadows"><svg width="16" height="16" viewBox="0 0 16 16"><path d="M0 13h9v2H0z" fill="#aaa"/><circle cx="6.500" cy="6" r="5.300" fill="#eee" stroke="#777" stroke-width="1.400"/><svg x="9" y="5" width="7" height="11"><use href="#bulb"/></svg></svg></button>
    <button aria-label="Crop view"><svg width="16" height="16" viewBox="0 0 16 16"><path d="M4.500 16V5.500H16" fill="none" stroke="#555" stroke-width="2"/><path d="M7 5v9h6V5" fill="none" stroke="#888" stroke-dasharray="1 1"/><path d="M10.500 0v3M0 10.500h3" stroke="#1e88e5" stroke-width="2"/><path d="M10 10l5 5M15 10l-5 5" stroke="#e53030" stroke-width="2"/></svg></button>
    <button aria-label="Show crop region"><svg width="16" height="16" viewBox="0 0 16 16"><path d="M4.500 16V5.500H16" fill="none" stroke="#555" stroke-width="2"/><path d="M10.500 0v3M0 10.500h3" stroke="#1e88e5" stroke-width="2"/><svg x="8" y="5" width="7" height="11"><use href="#bulb"/></svg></svg></button>
    <button aria-label="Temporary hide"><svg width="16" height="16" fill="none" stroke="#555"><circle cx="4" cy="10" r="2.500"/><circle cx="10.500" cy="10" r="2.500"/><path d="M2 8l4-3M9 8l5-4 0 5"/></svg></button>
    <button aria-label="Reveal hidden elements"><svg width="16" height="16" viewBox="0 0 16 16"><svg x="3" y="2" width="9" height="13"><use href="#bulb"/></svg></svg></button>
    <button aria-label="Temporary view properties"><svg width="16" height="16" fill="none" stroke="#777"><path d="M8 11.500H2.500v-9h9V6M5 8.500v-4h5"/><path d="M7.500 6.500h6v8h-6z" stroke-dasharray="2 1"/></svg></button>
    <button aria-label="Analytical model"><svg width="16" height="16" viewBox="0 0 16 16"><path d="M.5 5.500l4-4h9v8M.5 5.500h9l4-4M.5 5.500v9M9.500 5.500v5M3.500 3h9M6.500 1.500v13" fill="none" stroke="#555"/><path d="M3.500 15V8.500h4V15M2 11.500h6" fill="none" stroke="#c33"/><circle cx="12.500" cy="8.500" r="3.500" fill="#f3a83c"/><path d="M11 12.500h3v3h-3z" fill="#666"/></svg></button>
    <button aria-label="Reveal constraints"><svg width="16" height="16" viewBox="0 0 16 16"><path d="M.5 1v9M13.500 1v5M1 4.500h12" stroke="#555"/><path d="M0 12.500h8M3 2.500l-2 2 2 2M11 2.500l2 2-2 2" fill="none" stroke="#555" stroke-dasharray="2 1"/><svg x="9" y="5" width="7" height="11"><use href="#bulb"/></svg></svg></button>
  </div>
  <div class="flex h-full min-w-0 flex-1 items-center justify-between bg-[#e8e8e8]">
    <button aria-label="Scroll left" class="flex h-full w-[17px] items-center justify-center border-r border-[#d4d4d4]"><svg width="6" height="9"><path d="M5 .5l-4 4 4 4" fill="none" stroke="#999" stroke-width="1.500"/></svg></button>
    <span class="h-[5px] w-[17px] bg-[#d6d6d6]"></span>
    <button aria-label="Scroll right" class="flex h-full w-[17px] items-center justify-center border-l border-[#d4d4d4]"><svg width="6" height="9"><path d="M1 .5l4 4-4 4" fill="none" stroke="#888" stroke-width="1.800"/></svg></button>
  </div>
  <svg class="bg-[#f0f0f0]" width="16" height="17"><path d="M11 6h2v2h-2zM7 10h2v2H7zM11 10h2v2h-2z" fill="#999"/></svg>
</div>

<!-- Status bar -->
<footer class="flex h-[26px] shrink-0 items-center bg-[#fdfdfd]">
  <p class="w-[687px] pt-1 pl-0.5">Click to select, TAB for alternates, CTRL adds, SHIFT unselects.</p>
  <button aria-label="Worksets" class="mt-0.5"><svg width="16" height="16" viewBox="0 0 16 16"><path d="M0 2l4-1 1 2v9l-3 1-2-2z" fill="#4a9ad0"/><path d="M7 1l4-1 2 2v6H7z" fill="#e0884a"/><path d="M4 6l4-1 2 2v8l-3 1-3-1z" fill="#3fae6a" stroke="#fff" stroke-width=".5"/><path d="M9 15l6-6M13 8l3 2" stroke="#1e88e5" stroke-width="1.800"/></svg></button>
  <div class="relative ml-1.5 text-[#b5b5b5]">
    <select aria-label="Active workset" disabled class="block h-[22px] w-[208px] appearance-none bg-transparent opacity-100"></select>
    <svg class="absolute top-3 right-1" width="7" height="5"><path d="M.5.500l3 3 3-3" fill="none" stroke="#b5b5b5" stroke-width="1.500"/></svg>
  </div>
  <button class="ml-2 flex w-12 items-center pt-0.5 text-xs text-[#999]"><svg width="16" height="16" fill="none" stroke="#999"><path d="M1 15.500h9v-2l-2-2.500h-5l-2 2.500zM5.500 11c-4-5 4-5 1 0M8.500.5h7v5h-3l-2 2v-2h-2z"/></svg>:0</button>
  <button aria-label="Design options" class="w-[26px] pt-0.5 pl-1 text-[#555]"><svg width="16" height="16"><use href="#list"/></svg></button>
  <button aria-label="Add to option set" class="ml-0.5 w-[22px] pt-0.5 pl-0.5"><svg width="16" height="16" viewBox="0 0 16 16"><path d="M3.500 10V.5h11v12H8" fill="none" stroke="#888"/><path d="M3 0h12v3H3zM6 5h2v1H6zM9 5h5v1H9zM6 7.500h2v1H6zM9 7.500h5v1H9zM9 10h5v1H9zM0 12h5v-2l3 3-3 3v-2H0z" fill="#999"/></svg></button>
  <div class="relative">
    <select aria-label="Active design option" disabled class="block h-[22px] w-[210px] appearance-none bg-transparent pt-1 pl-2 text-[11px] text-[#a5a5a5] opacity-100"><option>Main Model</option></select>
    <svg class="absolute top-3 right-1" width="7" height="5"><path d="M.5.500l3 3 3-3" fill="none" stroke="#b5b5b5" stroke-width="1.500"/></svg>
  </div>
  <div class="mr-[94px] ml-auto flex items-center pt-0.5 [&>button]:flex [&>button]:w-[26px] [&>button]:justify-center">
    <button aria-label="Select links"><svg width="16" height="16" viewBox="0 0 16 16"><path d="M7 5.500H3.500a2 2 0 0 1 0-4H6M8 1.500h3.500a2 2 0 0 1 0 4H9" fill="none" stroke="#e88640" stroke-width="1.300"/><svg x="7" y="3" width="8" height="12"><use href="#ptr"/></svg></svg></button>
    <button aria-label="Select underlay elements"><svg width="16" height="16" viewBox="0 0 16 16"><path d="M1 7l5-5h4v5zM1 12l3-3h5v4z" fill="#4a9ad0"/><path d="M10 1l5 5M15 1l-5 5" stroke="#e53030" stroke-width="2"/><svg x="7" y="4" width="8" height="12"><use href="#ptr"/></svg></svg></button>
    <button aria-label="Select pinned elements"><svg width="16" height="16" viewBox="0 0 16 16"><path d="M2 1.500h8M4.500 2v5L2 9.500h8L8 7V2M5.500 10v4" fill="none" stroke="#555"/><svg x="7" y="4" width="8" height="12"><use href="#ptr"/></svg></svg></button>
    <button aria-label="Select by face"><svg width="16" height="16" viewBox="0 0 16 16"><path d="M1 4l7-3v11l-7 3z" fill="#64b0e8" stroke="#3c7fb5"/><path d="M10 1l5 5M15 1l-5 5" stroke="#e53030" stroke-width="2"/><svg x="7" y="4" width="8" height="12"><use href="#ptr"/></svg></svg></button>
    <button aria-label="Drag on selection"><svg width="16" height="16" viewBox="0 0 16 16"><path d="M6.500 1v11M1 6.500h11M5 2.500L6.500 1 8 2.500M2.500 5L1 6.500 2.500 8M5 10.500L6.500 12" fill="none" stroke="#333" stroke-width="1.200"/><svg x="7" y="4" width="8" height="12"><use href="#ptr"/></svg></svg></button>
    <button aria-label="Background processes"><svg width="16" height="16" viewBox="0 0 16 16"><circle cx="8" cy="8" r="6" fill="none" stroke="#b8b8b8" stroke-width="3" stroke-dasharray="0 4.710" stroke-linecap="round"/></svg></button>
    <button class="w-auto! items-center pl-0.5 text-xs text-[#3c4a66]"><svg width="16" height="16"><path d="M.5 1.500h15L10 8.500v6l-3-2v-4z" fill="#d8d8d8" stroke="#666" stroke-width="1.200"/></svg>:0</button>
  </div>
</footer>
</body>
</html>
